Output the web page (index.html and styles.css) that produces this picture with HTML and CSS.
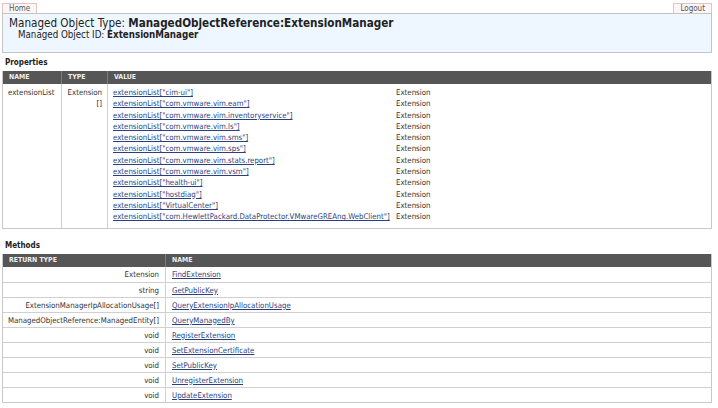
FILE: index.html
```html
<!DOCTYPE html>
<html>
<head>
<meta charset="utf-8">
<link rel="stylesheet" href="styles.css">
</head>
<body>
<div class="topbar">
  <a class="tab" href="#">Home</a>
  <a class="tab" href="#">Logout</a>
</div>
<div class="objhead">
  <div class="objtype">Managed Object Type: <b>ManagedObjectReference:ExtensionManager</b></div>
  <div class="objid">Managed Object ID: <b>ExtensionManager</b></div>
</div>

<div class="section">Properties</div>
<div class="grid props">
  <div class="hrow">
    <div class="hcell">NAME</div>
    <div class="hcell">TYPE</div>
    <div class="hcell">VALUE</div>
  </div>
  <div class="prow">
    <div class="pcell">extensionList</div>
    <div class="pcell ptype">Extension []</div>
    <div class="pcell pvalue">
      <div class="vrow"><a href="#">extensionList["cim-ui"]</a><span>Extension</span></div>
      <div class="vrow"><a href="#">extensionList["com.vmware.vim.eam"]</a><span>Extension</span></div>
      <div class="vrow"><a href="#">extensionList["com.vmware.vim.inventoryservice"]</a><span>Extension</span></div>
      <div class="vrow"><a href="#">extensionList["com.vmware.vim.ls"]</a><span>Extension</span></div>
      <div class="vrow"><a href="#">extensionList["com.vmware.vim.sms"]</a><span>Extension</span></div>
      <div class="vrow"><a href="#">extensionList["com.vmware.vim.sps"]</a><span>Extension</span></div>
      <div class="vrow"><a href="#">extensionList["com.vmware.vim.stats.report"]</a><span>Extension</span></div>
      <div class="vrow"><a href="#">extensionList["com.vmware.vim.vsm"]</a><span>Extension</span></div>
      <div class="vrow"><a href="#">extensionList["health-ui"]</a><span>Extension</span></div>
      <div class="vrow"><a href="#">extensionList["hostdiag"]</a><span>Extension</span></div>
      <div class="vrow"><a href="#">extensionList["VirtualCenter"]</a><span>Extension</span></div>
      <div class="vrow"><a href="#">extensionList["com.HewlettPackard.DataProtector.VMwareGREAng.WebClient"]</a><span>Extension</span></div>
    </div>
  </div>
</div>

<div class="section methods-label">Methods</div>
<div class="grid methods">
  <div class="hrow">
    <div class="hcell">RETURN TYPE</div>
    <div class="hcell">NAME</div>
  </div>
  <div class="mrow"><div class="mret">Extension</div><div class="mname"><a href="#">FindExtension</a></div></div>
  <div class="mrow"><div class="mret">string</div><div class="mname"><a href="#">GetPublicKey</a></div></div>
  <div class="mrow"><div class="mret">ExtensionManagerIpAllocationUsage[]</div><div class="mname"><a href="#">QueryExtensionIpAllocationUsage</a></div></div>
  <div class="mrow"><div class="mret">ManagedObjectReference:ManagedEntity[]</div><div class="mname"><a href="#">QueryManagedBy</a></div></div>
  <div class="mrow"><div class="mret">void</div><div class="mname"><a href="#">RegisterExtension</a></div></div>
  <div class="mrow"><div class="mret">void</div><div class="mname"><a href="#">SetExtensionCertificate</a></div></div>
  <div class="mrow"><div class="mret">void</div><div class="mname"><a href="#">SetPublicKey</a></div></div>
  <div class="mrow"><div class="mret">void</div><div class="mname"><a href="#">UnregisterExtension</a></div></div>
  <div class="mrow"><div class="mret">void</div><div class="mname"><a href="#">UpdateExtension</a></div></div>
</div>
</body>
</html>
```
FILE: styles.css
```css
html, body {
  background: #ffffff;
}
body {
  margin: 0 6px 0 2px;
  font-family: "DejaVu Sans Condensed", "DejaVu Sans", sans-serif;
  font-size: 7.8px;
  color: #333333;
}
a {
  color: #2b3f80;
  text-decoration: underline;
}

/* top tabs */
.topbar {
  display: flex;
  justify-content: space-between;
  align-items: flex-end;
  height: 13px;
}
.tab {
  display: block;
  box-sizing: border-box;
  height: 10px;
  font-size: 8px;
  line-height: 9px;
  padding: 0 6px;
  color: #555555;
  text-decoration: none;
  background: #fdf5f6;
  border: 1px solid #e4c2c8;
  border-bottom: none;
}

/* object header */
.objhead {
  box-sizing: border-box;
  height: 40px;
  background: #eef7ff;
  border: 1px solid #c4c4c4;
  padding: 3px 6px 0;
  color: #222222;
}
.objtype {
  font-size: 11.6px;
  line-height: 13px;
}
.objid {
  font-size: 9.7px;
  line-height: 10px;
  padding-left: 9px;
}

/* section labels */
.section {
  font-weight: bold;
  font-size: 8px;
  color: #222222;
  margin: 5px 0 0 3px;
  line-height: 10px;
  height: 10px;
}
.methods-label {
  margin-top: 12px;
}

/* grid tables */
.grid {
  border: 1px solid #c8c8c8;
  border-top: none;
  margin-top: 3px;
}
.hrow {
  display: grid;
  height: 13px;
  background: #565656;
}
.props .hrow,
.prow {
  grid-template-columns: 58px 46px 1fr;
}
.methods .hrow,
.mrow {
  grid-template-columns: 162px 1fr;
}
.hcell {
  color: #eeeeee;
  font-weight: bold;
  font-size: 6.9px;
  line-height: 13px;
  padding-left: 6px;
  border-left: 1px solid #7c7c7c;
}
.hcell:first-child {
  border-left: none;
}

/* properties body */
.prow {
  display: grid;
}
.pcell {
  line-height: 11.3px;
  padding: 3px 5px 5px 5px;
  border-left: 1px solid #d0d0d0;
}
.pcell:first-child {
  border-left: none;
}
.ptype {
  text-align: right;
}
.pvalue {
  padding-left: 5px;
}
.vrow {
  display: grid;
  grid-template-columns: 283px auto;
  height: 11.3px;
}

/* methods body */
.mrow {
  display: grid;
  height: 15px;
  box-sizing: border-box;
  border-top: 1px solid #d0d0d0;
}
.hrow + .mrow {
  border-top: none;
}
.mret {
  text-align: right;
  line-height: 15px;
  padding-right: 6px;
}
.mname {
  line-height: 15px;
  padding-left: 6px;
  border-left: 1px solid #d0d0d0;
}
```
